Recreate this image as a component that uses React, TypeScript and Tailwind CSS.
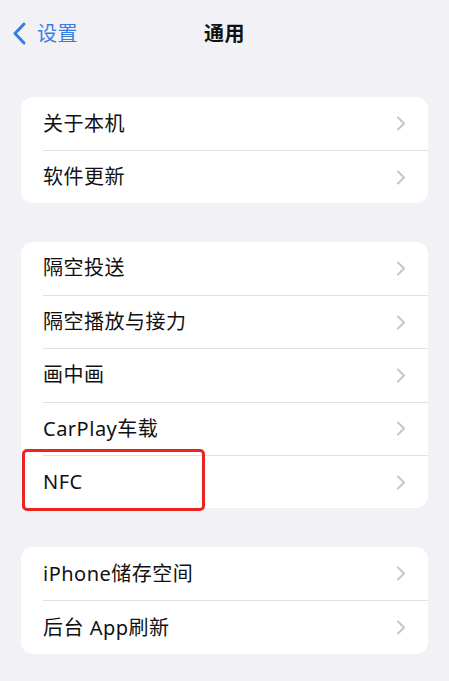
import React from "react";

const font = { fontFamily: '"Noto Sans", "Noto Sans CJK SC", sans-serif' };

function Chevron() {
  return (
    <svg width="10" height="15" viewBox="0 0 10 15" fill="none">
      <path d="M2 1.5 L8 7.5 L2 13.5" stroke="#c6c6c9" strokeWidth="2" strokeLinecap="round" strokeLinejoin="round" />
    </svg>
  );
}

type Item = { label: string; highlight?: boolean };

function Row({ item, first, h }: { item: Item; first: boolean; h: string }) {
  return (
    <div className="relative pl-[22px]">
      <div
        className={`flex items-center justify-between pr-[22px] ${h} ${first ? "" : "border-t border-[#e2e2e5]"}`}
      >
        <span className="text-[20px] leading-none text-[#111] tracking-[0.5px] whitespace-pre">{item.label}</span>
        <Chevron />
      </div>
      {item.highlight && (
        <div className="absolute left-[1px] top-[-6px] w-[183px] h-[62px] border-[3.5px] border-[#e8261f] rounded-[5px]" />
      )}
    </div>
  );
}

function Card({ items, h }: { items: Item[]; h: string }) {
  return (
    <div className="mx-[21px] bg-white rounded-[12px]">
      {items.map((it, i) => (
        <Row key={it.label} item={it} first={i === 0} h={h} />
      ))}
    </div>
  );
}

export default function App() {
  return (
    <div className="w-[449px] h-[681px] bg-[#f1f1f6] overflow-hidden" style={font}>
      <div className="relative h-[68px] flex items-center justify-center">
        <div className="absolute left-[12px] top-[22px] flex items-center gap-[10px]">
          <svg width="15" height="23" viewBox="0 0 15 23" fill="none">
            <path d="M12 2 L3 11.5 L12 21" stroke="#3a7de2" strokeWidth="3" strokeLinecap="round" strokeLinejoin="round" />
          </svg>
          <span className="text-[20px] leading-none text-[#3a7de2] tracking-[0.5px]">设置</span>
        </div>
        <span className="text-[20px] leading-none font-bold text-[#111] tracking-[0.5px]">通用</span>
      </div>
      <div className="pt-[29px] flex flex-col gap-[38.5px]">
        <Card h="h-[53px]" items={[{ label: "关于本机" }, { label: "软件更新" }]} />
        <Card
          h="h-[53.4px]"
          items={[
            { label: "隔空投送" },
            { label: "隔空播放与接力" },
            { label: "画中画" },
            { label: "CarPlay车载" },
            { label: "NFC", highlight: true },
          ]}
        />
        <Card h="h-[53.5px]" items={[{ label: "iPhone储存空间" }, { label: "后台 App刷新" }]} />
      </div>
    </div>
  );
}
